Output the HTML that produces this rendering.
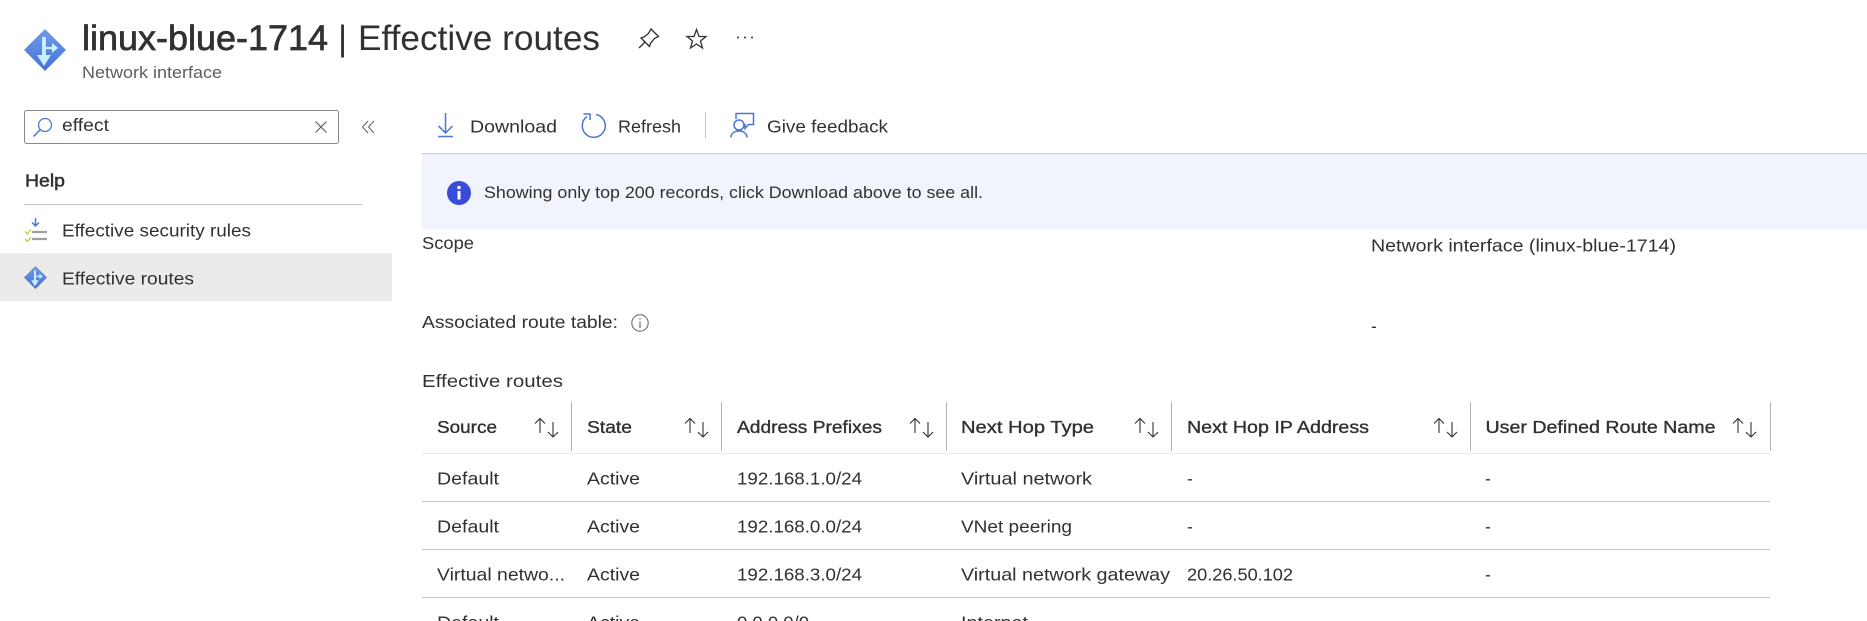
<!DOCTYPE html>
<html lang="en"><head><meta charset="utf-8"><title>linux-blue-1714 | Effective routes</title>
<style>
html,body{margin:0;padding:0;background:#fff;width:1867px;height:621px;overflow:hidden}
svg{display:block}
text{font-family:"Liberation Sans",Arial,sans-serif;font-size:17.4px;fill:#323130;white-space:pre}
.s{stroke:#323130;stroke-width:.5px}
.h{font-size:17.2px;stroke:#323130;stroke-width:.35px}
.i{fill:none;stroke:#4a76d6;stroke-width:1.5}
.d{fill:none;stroke:#323130;stroke-width:1.3}
</style></head><body>
<svg width="1867" height="621" viewBox="0 0 1867 621" xmlns="http://www.w3.org/2000/svg">
<defs>
<linearGradient id="g" x1="0" y1="0" x2="0" y2="1"><stop offset="0" stop-color="#6f9be8"/><stop offset="1" stop-color="#4472d8"/></linearGradient>
<g id="nic">
<path d="M0-21 21 0 0 21-21 0Z" fill="url(#g)"/>
<path d="M-1-13V7" stroke="#c9f0ff" stroke-width="3.8" fill="none"/>
<path d="M-8 5H6L-1 16Z" fill="#c9f0ff"/>
<path d="M1-2H8" stroke="#c9f0ff" stroke-width="2.4" fill="none"/>
<path d="M7-7 13-2 7 3Z" fill="#c9f0ff"/>
</g>
<g id="sort" fill="none" stroke="#323130" stroke-width="1.1">
<path d="M6 .5V15M1 5.500 6 .5 11 5.500"/>
<path d="M19 4V19M14 14 19 19 24 14"/>
</g>
</defs>
<rect width="1867" height="621" fill="#fff"/>

<!-- header -->
<use href="#nic" x="45" y="50"/>
<text x="82" y="50" class="s" style="font-size:35px;stroke-width:.7px" textLength="246" lengthAdjust="spacingAndGlyphs">linux-blue-1714</text>
<text x="338" y="50" style="font-size:35px">|</text>
<text x="358" y="50" style="font-size:35px" textLength="242" lengthAdjust="spacingAndGlyphs">Effective routes</text>
<text x="82" y="78" style="font-size:17px;fill:#605e5c" textLength="140" lengthAdjust="spacingAndGlyphs">Network interface</text>
<!-- pin -->
<path class="d" d="M639 48 645.500 41.500M651 29 658.500 36.500 654.500 38.500 650.500 43.500 649.500 46.500 641 38 644 37 648.500 33.500Z"/>
<!-- star -->
<path class="d" d="M696.500 29.500 699 36.500 706 36.500 700.500 41 702.500 48 696.500 44 690.500 48 692.500 41 687 36.500 694 36.500Z"/>
<circle cx="738" cy="37.500" r="1" fill="#323130"/><circle cx="745" cy="37.500" r="1" fill="#323130"/><circle cx="752" cy="37.500" r="1" fill="#323130"/>

<!-- sidebar -->
<rect x="24.500" y="110.500" width="314" height="33" rx="2" fill="#fff" stroke="#8a8886" stroke-width="1"/>
<circle cx="45" cy="125" r="6.500" fill="none" stroke="#4a76d6" stroke-width="1.300"/>
<path d="M40.500 129.500 33.500 136.500" stroke="#4a76d6" stroke-width="1.500" fill="none"/>
<text x="62" y="131" textLength="47" lengthAdjust="spacingAndGlyphs">effect</text>
<path d="M315.500 121.500 326.500 132.500M326.500 121.500 315.500 132.500" stroke="#605e5c" stroke-width="1.100" fill="none"/>
<path d="M368 121 362.500 127 368 133M374 121 368.500 127 374 133" fill="none" stroke="#605e5c" stroke-width="1"/>
<text x="25" y="186.500" class="s" textLength="40" lengthAdjust="spacingAndGlyphs">Help</text>
<rect x="24" y="204" width="338" height="1" fill="#c8c6c4"/>
<path d="M35.500 218V226M32 222.500 35.500 226 39 222.500" fill="none" stroke="#4a76d6" stroke-width="1.500"/>
<path d="M32 232H47M32 239H47" stroke="#a19f9d" stroke-width="2.200" fill="none"/>
<path d="M25 231.500 27.500 234 31 229.500M25 239 27.500 241.500 31 237" stroke="#b4d23c" stroke-width="1.300" fill="none"/>
<text x="62" y="236.500" textLength="189" lengthAdjust="spacingAndGlyphs">Effective security rules</text>
<rect x="0" y="253" width="392" height="48" fill="#edebe9"/>
<use href="#nic" transform="translate(35.500 277.500) scale(.55)"/>
<text x="62" y="284.500" textLength="132" lengthAdjust="spacingAndGlyphs">Effective routes</text>

<!-- toolbar -->
<path d="M445.500 113V133M438.500 126 445.500 133 452.500 126" class="i"/>
<path d="M438 136.500H453" class="i"/>
<text x="470" y="132.500" textLength="87" lengthAdjust="spacingAndGlyphs">Download</text>
<path d="M587 116.500A11.500 11.500 0 1 0 596 114.500" class="i"/>
<path d="M583.500 114H590V120" class="i"/>
<text x="618" y="132.500" textLength="63" lengthAdjust="spacingAndGlyphs">Refresh</text>
<rect x="705" y="112" width="1" height="26" fill="#c8c6c4"/>
<path d="M736 119V113.500H753.500V124.500H748.500L745 128.500V124" class="i"/>
<circle cx="739" cy="125" r="5" class="i"/>
<path d="M731 137.500C731 133 735 131 739 131S747 133 747 137.500" class="i"/>
<text x="767" y="132.500" textLength="121" lengthAdjust="spacingAndGlyphs">Give feedback</text>

<!-- banner -->
<rect x="422" y="153" width="1445" height="76" fill="#f1f3fd"/>
<rect x="422" y="153" width="1445" height="1.200" fill="#d2d0ce"/>
<circle cx="459" cy="193" r="12" fill="#3a4bd8"/>
<rect x="457.500" y="191" width="3" height="8.500" fill="#fff"/><circle cx="459" cy="187.500" r="1.800" fill="#fff"/>
<text x="484" y="198" textLength="499" lengthAdjust="spacingAndGlyphs" style="font-size:16.600px">Showing only top 200 records, click Download above to see all.</text>

<!-- details -->
<text x="422" y="249" textLength="52" lengthAdjust="spacingAndGlyphs">Scope</text>
<text x="1371" y="251.500" textLength="305" lengthAdjust="spacingAndGlyphs">Network interface (linux-blue-1714)</text>
<text x="422" y="328" textLength="196" lengthAdjust="spacingAndGlyphs">Associated route table:</text>
<circle cx="640" cy="323" r="8.200" fill="none" stroke="#605e5c" stroke-width="1"/>
<path d="M640 321.500V328M640 318V319.500" stroke="#605e5c" stroke-width="1.100" fill="none"/>
<text x="1371" y="332">-</text>
<text x="422" y="387" textLength="141" lengthAdjust="spacingAndGlyphs">Effective routes</text>

<!-- table header -->
<rect x="571" y="402" width="1" height="49" fill="#b3b0ad"/><rect x="721" y="402" width="1" height="49" fill="#b3b0ad"/>
<rect x="946" y="402" width="1" height="49" fill="#b3b0ad"/><rect x="1171" y="402" width="1" height="49" fill="#b3b0ad"/>
<rect x="1470" y="402" width="1" height="49" fill="#b3b0ad"/><rect x="1770" y="402" width="1" height="49" fill="#b3b0ad"/>
<text x="437" y="433" class="h" textLength="60" lengthAdjust="spacingAndGlyphs">Source</text>
<text x="587" y="433" class="h" textLength="45" lengthAdjust="spacingAndGlyphs">State</text>
<text x="737" y="433" class="h" textLength="145" lengthAdjust="spacingAndGlyphs">Address Prefixes</text>
<text x="961" y="433" class="h" textLength="133" lengthAdjust="spacingAndGlyphs">Next Hop Type</text>
<text x="1187" y="433" class="h" textLength="182" lengthAdjust="spacingAndGlyphs">Next Hop IP Address</text>
<text x="1485.500" y="433" class="h" textLength="230" lengthAdjust="spacingAndGlyphs">User Defined Route Name</text>
<use href="#sort" x="534" y="418"/><use href="#sort" x="684" y="418"/><use href="#sort" x="909" y="418"/>
<use href="#sort" x="1134" y="418"/><use href="#sort" x="1433" y="418"/><use href="#sort" x="1732" y="418"/>
<rect x="422" y="453" width="1348" height="1" fill="#edebe9"/>
<rect x="422" y="501" width="1348" height="1" fill="#c8c6c4"/>
<rect x="422" y="549" width="1348" height="1" fill="#c8c6c4"/>
<rect x="422" y="597" width="1348" height="1" fill="#c8c6c4"/>

<!-- rows -->
<text x="437" y="484.500" textLength="62" lengthAdjust="spacingAndGlyphs">Default</text>
<text x="587" y="484.500" textLength="53" lengthAdjust="spacingAndGlyphs">Active</text>
<text x="737" y="484.500" textLength="125" lengthAdjust="spacingAndGlyphs">192.168.1.0/24</text>
<text x="961" y="484.500" textLength="131" lengthAdjust="spacingAndGlyphs">Virtual network</text>
<text x="1187" y="484.500">-</text><text x="1485" y="484.500">-</text>

<text x="437" y="532.500" textLength="62" lengthAdjust="spacingAndGlyphs">Default</text>
<text x="587" y="532.500" textLength="53" lengthAdjust="spacingAndGlyphs">Active</text>
<text x="737" y="532.500" textLength="125" lengthAdjust="spacingAndGlyphs">192.168.0.0/24</text>
<text x="961" y="532.500" textLength="111" lengthAdjust="spacingAndGlyphs">VNet peering</text>
<text x="1187" y="532.500">-</text><text x="1485" y="532.500">-</text>

<text x="437" y="580.500" textLength="128" lengthAdjust="spacingAndGlyphs">Virtual netwo...</text>
<text x="587" y="580.500" textLength="53" lengthAdjust="spacingAndGlyphs">Active</text>
<text x="737" y="580.500" textLength="125" lengthAdjust="spacingAndGlyphs">192.168.3.0/24</text>
<text x="961" y="580.500" textLength="209" lengthAdjust="spacingAndGlyphs">Virtual network gateway</text>
<text x="1187" y="580.500" textLength="106" lengthAdjust="spacingAndGlyphs">20.26.50.102</text>
<text x="1485" y="580.500">-</text>

<text x="437" y="628.500" textLength="62" lengthAdjust="spacingAndGlyphs">Default</text>
<text x="587" y="628.500" textLength="53" lengthAdjust="spacingAndGlyphs">Active</text>
<text x="737" y="628.500" textLength="72" lengthAdjust="spacingAndGlyphs">0.0.0.0/0</text>
<text x="961" y="628.500" textLength="67" lengthAdjust="spacingAndGlyphs">Internet</text>
</svg>
</body></html>
